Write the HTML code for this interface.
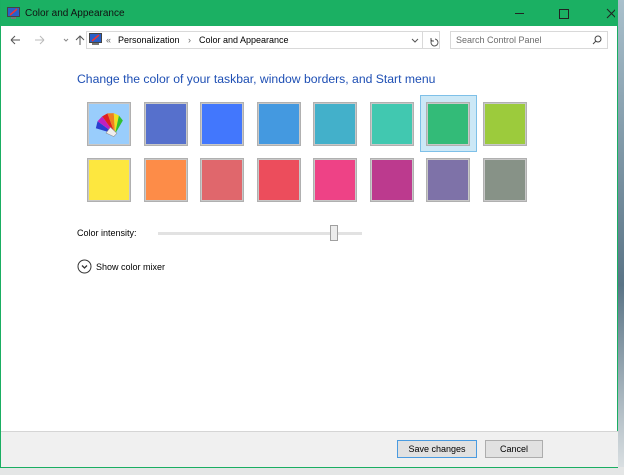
<!DOCTYPE html>
<html><head><meta charset="utf-8"><style>
*{margin:0;padding:0;box-sizing:border-box}
body{width:624px;height:475px;position:relative;overflow:hidden;background:#c8d6dc;font-family:"Liberation Sans",sans-serif;font-size:9px;color:#000}
.desk{position:absolute;left:617px;top:0;width:7px;height:475px;background:linear-gradient(#a9c0cc,#5a7486 60%,#dfe4e6)}
.deskb{position:absolute;left:0;top:467px;width:624px;height:8px;background:#e4e6e6}
.win{position:absolute;left:0;top:0;width:618px;height:468px;background:#fff;border:1px solid #1aae62;border-top:none}
.title{position:absolute;left:0;top:0;width:617px;height:26px;background:#1bb063}
.title span{position:absolute;left:24px;top:8px;font-size:10px;color:#111}
.abs{position:absolute}
.tile{position:absolute;width:44px;height:44px;border:1px solid #b0b0b0;outline:1px solid #c8c8c8;outline-offset:-2px}
.btn{position:absolute;top:440px;height:18px;background:#e1e1e1;border:1px solid #adadad;font-size:9px;text-align:center;line-height:16px}
</style></head><body>
<div class="desk"></div><div class="deskb"></div>
<div class="win">
<div class="title"><span>Color and Appearance</span>
<svg class="abs" style="left:6px;top:7px" width="14" height="13"><rect x="0.5" y="0.5" width="12" height="9" fill="#2a60c8" stroke="#444"/><path d="M3 8 L10 2" stroke="#e33" stroke-width="1.5"/><rect x="4" y="10" width="5" height="2" fill="#777"/></svg>
<svg class="abs" style="left:514px;top:8px" width="100" height="12"><path d="M0 5.5h9" stroke="#222"/><rect x="44.5" y="1.5" width="9" height="9" fill="none" stroke="#222"/><path d="M92 1l9 9M101 1l-9 9" stroke="#222"/></svg>
</div>
<svg class="abs" style="left:8px;top:34px" width="80" height="12"><path d="M2 6h9M2 6l4-4M2 6l4 4" stroke="#555" fill="none"/><path d="M26 6h9M35 6l-4-4M35 6l-4 4" stroke="#bbb" fill="none"/><path d="M55 5l2 2 2-2" stroke="#888" fill="none"/><path d="M67 6l4-4 4 4M71 2v9" stroke="#555" fill="none"/></svg>
<div class="abs" style="left:85px;top:31px;width:354px;height:18px;border:1px solid #d9d9d9"></div>
<div class="abs" style="left:421px;top:31px;width:1px;height:18px;background:#d9d9d9"></div>
<svg class="abs" style="left:88px;top:33px" width="14" height="13"><rect x="0.5" y="0.5" width="12" height="9" fill="#2a60c8" stroke="#444"/><path d="M3 8 L10 2" stroke="#e33" stroke-width="1.5"/><rect x="3" y="10" width="7" height="2" fill="#777"/></svg>
<div class="abs" style="left:105px;top:35px;color:#666">«</div>
<div class="abs" style="left:117px;top:35px">Personalization</div>
<div class="abs" style="left:187px;top:35px;color:#666">›</div>
<div class="abs" style="left:198px;top:35px">Color and Appearance</div>
<svg class="abs" style="left:410px;top:37px" width="30" height="10"><path d="M1 2l3 3 3-3" stroke="#555" fill="none"/><path d="M24 2a3.5 3.5 0 1 1-3 1" stroke="#555" fill="none"/><path d="M20 1v3h3" stroke="#555" fill="none"/></svg>
<div class="abs" style="left:449px;top:31px;width:158px;height:18px;border:1px solid #d9d9d9"></div>
<div class="abs" style="left:455px;top:35px;color:#6d6d6d">Search Control Panel</div>
<svg class="abs" style="left:591px;top:35px" width="10" height="10"><circle cx="6" cy="4" r="3" stroke="#444" fill="none"/><path d="M4 6l-3 3" stroke="#444"/></svg>
<div class="abs" style="left:76px;top:72px;font-size:12.2px;color:#1e4fb4">Change the color of your taskbar, window borders, and Start menu</div>
<div class="abs" style="left:419px;top:95px;width:57px;height:57px;background:#cce8f6;border:1px solid #7ec0e8"></div>
<div class="tile" style="left:86px;top:102px;background:#99cdfc"></div>
<svg class="abs" style="left:92px;top:108px" width="34" height="32"><g transform="translate(22,26) rotate(-20)"><path d="M0 0L-16-12L-12-18Z" fill="#2a3ed0"/><path d="M0 0L-12-18L-6-21Z" fill="#c020c0"/><path d="M0 0L-6-21L0-22Z" fill="#e02020"/><path d="M0 0L0-22L6-20Z" fill="#f08020"/><path d="M0 0L6-20L10-16Z" fill="#f0e020"/><path d="M0 0L10-16L12-10Z" fill="#30c030"/><path d="M-8-4l6-4 4 8-4 2z" fill="#eee" stroke="#888" stroke-width=".5"/></g></svg>
<div class="tile" style="left:143px;top:102px;background:#5670cc"></div>
<div class="tile" style="left:199px;top:102px;background:#4277fd"></div>
<div class="tile" style="left:256px;top:102px;background:#4499e0"></div>
<div class="tile" style="left:312px;top:102px;background:#43b0ca"></div>
<div class="tile" style="left:369px;top:102px;background:#41c8b0"></div>
<div class="tile" style="left:425px;top:102px;background:#33bb78"></div>
<div class="tile" style="left:482px;top:102px;background:#9ccb3c"></div>
<div class="tile" style="left:86px;top:158px;background:#fde73f"></div>
<div class="tile" style="left:143px;top:158px;background:#fd8c48"></div>
<div class="tile" style="left:199px;top:158px;background:#e0676c"></div>
<div class="tile" style="left:256px;top:158px;background:#ec4d5c"></div>
<div class="tile" style="left:312px;top:158px;background:#ee4286"></div>
<div class="tile" style="left:369px;top:158px;background:#bc3a8e"></div>
<div class="tile" style="left:425px;top:158px;background:#7e72a8"></div>
<div class="tile" style="left:482px;top:158px;background:#879287"></div>
<div class="abs" style="left:76px;top:228px">Color intensity:</div>
<div class="abs" style="left:157px;top:232px;width:204px;height:3px;background:#e2e2e2"></div>
<div class="abs" style="left:329px;top:225px;width:8px;height:16px;background:#ececec;border:1px solid #a0a0a0"></div>
<svg class="abs" style="left:76px;top:259px" width="15" height="15"><circle cx="7.5" cy="7.5" r="6.5" stroke="#333" fill="none"/><path d="M5 6.5l2.5 2.5 2.5-2.5" stroke="#333" fill="none" stroke-width="1.3"/></svg>
<div class="abs" style="left:95px;top:262px">Show color mixer</div>
<div class="abs" style="left:0;top:431px;width:617px;height:36px;background:#f0f0f0;border-top:1px solid #d5d5d5"></div>
<div class="btn" style="left:396px;width:80px;border-color:#4a9be0">Save changes</div>
<div class="btn" style="left:484px;width:58px">Cancel</div>
</div>
</body></html>
